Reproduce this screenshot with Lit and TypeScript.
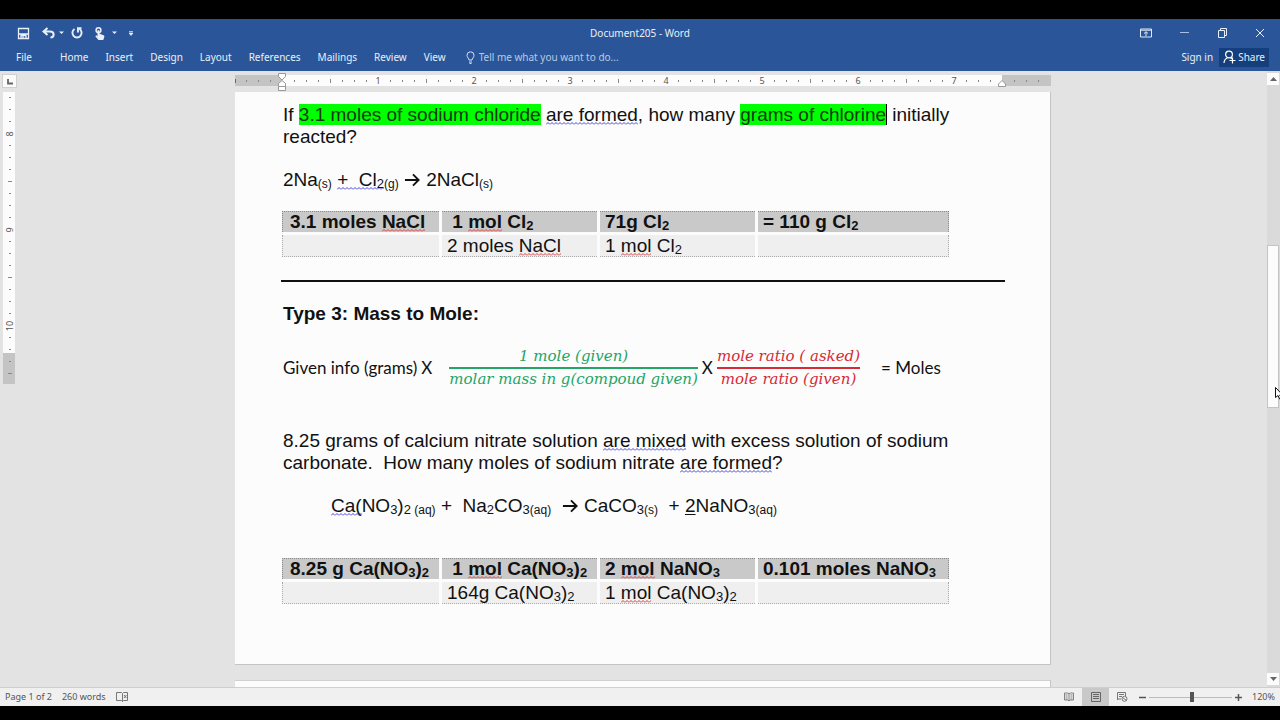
import { LitElement, html, css, svg, nothing } from "lit";
import { customElement, property } from "lit/decorators.js";

const TABS = ["Home", "Insert", "Design", "Layout", "References", "Mailings", "Review", "View"];

const arrow = html`<svg class="arrow" viewBox="0 0 18 14" role="img" aria-label="yields">
  <path d="M1 7H15.500M9.500 1L15.500 7L9.500 13" fill="none" stroke="#111" stroke-width="2" />
</svg>`;

@customElement("word-titlebar")
class WordTitlebar extends LitElement {
  static styles = css`
    :host { display: block; background: #2a5699; color: #e9eff8; font: 10px/16px "Noto Sans", "Open Sans", sans-serif; }
    button, a, input { font: inherit; color: inherit; background: none; border: 0; padding: 0; margin: 0; text-decoration: none; }
    svg { display: block; }
    .title { display: grid; grid-template-columns: 1fr auto 1fr; align-items: center; height: 28px; }
    .quick { display: flex; align-items: center; padding-left: 17px; }
    .gap { margin-left: 12px; }
    .near { margin-left: 4px; }
    .mid { margin-left: 7px; }
    .window { display: flex; justify-content: flex-end; align-items: center; gap: 26px; padding-right: 14px; }
    .ribbon { display: flex; align-items: center; height: 20px; padding-bottom: 4px; padding-right: 11px; }
    .file { margin-left: 16px; margin-right: 28px; }
    .tabs { display: flex; gap: 17px; }
    .tell { display: flex; align-items: center; gap: 4px; margin-left: 20px; flex: 1; color: #c3d1e7; }
    .tell input { width: 200px; outline: 0; }
    .tell input::placeholder { color: #b9c9e2; opacity: 1; }
    .share { display: flex; align-items: center; gap: 2px; margin-left: 6px; height: 19px; padding: 0 4px; background: #153f7c; }
  `;
  render() {
    const caret = html`<svg width="5" height="4" viewBox="0 0 5 4"><path d="M0 .5h5L2.500 3z" fill="#e9eff8" /></svg>`;
    return html`
      <div class="title">
        <div class="quick">
          <button aria-label="Save"><svg width="13" height="13" viewBox="0 0 13 13"><path d="M1.500 1.500h10v10h-10zM3 1.500M2 7h9M4 11.500V8.500h5v3M6 9v2" fill="none" stroke="#e9eff8" stroke-width="1.300" /></svg></button>
          <button class="gap" aria-label="Undo"><svg width="13" height="12" viewBox="0 0 13 12"><path d="M5.500 1L1.500 4.500L5.500 8M2 4.500H8c5 0 4.500 6 .500 6" fill="none" stroke="#e9eff8" stroke-width="2" /></svg></button>
          <button class="near" aria-label="Undo list">${caret}</button>
          <button class="mid" aria-label="Repeat"><svg width="12" height="12" viewBox="0 0 12 12"><path d="M3.500 2A4.600 4.600 0 1 0 8.500 2M6 1.200h4.500M7 1v4.500" fill="none" stroke="#e9eff8" stroke-width="1.900" /></svg></button>
          <button class="gap" aria-label="Touch mode"><svg width="10" height="13" viewBox="0 0 10 13"><circle cx="3.500" cy="3.200" r="2.400" fill="none" stroke="#e9eff8" stroke-width="1.500" /><path d="M2.500 3.200h2v3.500l4 1.500c1 .4 1 1 .7 2L8.300 13H3.500L.3 9.200l1-.9 1.200.9z" fill="#e9eff8" /></svg></button>
          <button class="mid" aria-label="Touch mode list">${caret}</button>
          <button class="gap" aria-label="Customize toolbar"><svg width="4" height="5" viewBox="0 0 4 5"><path d="M0 .5h4M0 2h4L2 4.500z" stroke="#e9eff8" stroke-width=".7" fill="#e9eff8" /></svg></button>
        </div>
        <div>Document205 - Word</div>
        <div class="window">
          <button aria-label="Ribbon display"><svg width="12" height="10" viewBox="0 0 12 10"><path d="M.5 1h11v8H.5zM.5 2.200h11M6 8V4M4 5.500L6 3.700L8 5.500" fill="none" stroke="#dfe8f5" /></svg></button>
          <button aria-label="Minimize"><svg width="12" height="10" viewBox="0 0 12 10"><path d="M2 4.500h9" stroke="#a9c0e4" /></svg></button>
          <button aria-label="Restore"><svg width="12" height="10" viewBox="0 0 12 10"><path d="M2.500 2.500h6v7h-6zM4.500 2.500v-2h6v7h-2" fill="none" stroke="#e9eff8" /></svg></button>
          <button aria-label="Close"><svg width="12" height="10" viewBox="0 0 12 10"><path d="M2 1l8 8M10 1L2 9" stroke="#e9eff8" /></svg></button>
        </div>
      </div>
      <div class="ribbon">
        <button class="file">File</button>
        <nav class="tabs">${TABS.map((t) => html`<button>${t}</button>`)}</nav>
        <label class="tell">
          <svg width="9" height="13" viewBox="0 0 9 13"><path d="M3 9C3 7.500 1 6.500 1 4.300a3.500 3.500 0 0 1 7 0C8 6.500 6 7.500 6 9zM3 11h3M3.500 12.500h2" fill="none" stroke="#d5e0f0" /></svg>
          <input aria-label="Tell me what you want to do" placeholder="Tell me what you want to do..." />
        </label>
        <a href="#signin">Sign in</a>
        <button class="share">
          <svg width="13" height="14" viewBox="0 0 13 14"><circle cx="6" cy="4.500" r="3.400" fill="none" stroke="#fff" stroke-width="1.200" /><path d="M1 13c.2-3 1.500-4.500 3.500-5.300M7.500 7.700l1.500 1M9.500 7.500v6M6.500 10.500h6" fill="none" stroke="#fff" stroke-width="1.200" /></svg>
          Share
        </button>
      </div>
    `;
  }
}

@customElement("word-rule")
class WordRule extends LitElement {
  @property({ type: Boolean }) vertical = false;
  static styles = css`
    :host { display: block; }
    svg { display: block; }
    .num { font: 9px "Noto Sans", sans-serif; fill: #555; text-anchor: middle; }
  `;
  render() {
    return this.vertical ? this.side() : this.top();
  }
  mark(k: number) {
    if (k % 8 === 0) return null;
    return k % 4 === 0 ? 3 : 1;
  }
  side() {
    const rows = Array.from({ length: 24 }, (_, i) => i);
    return html`<svg width="19" height="313" viewBox="0 0 19 313">
      <rect x="2.500" y="3.500" width="14" height="13" fill="#fbfbfb" stroke="#d0d0d0" />
      <path d="M8 8v4.500h5" fill="none" stroke="#666" stroke-width="1.800" />
      <rect x="3" y="21" width="12" height="261" fill="#fcfcfc" />
      <rect x="3" y="282" width="12" height="31" fill="#c4c4c4" />
      ${rows.map((i) => {
        const y = 27 + i * 12;
        const h = this.mark(i + 5);
        return h === null
          ? svg`<text class="num" transform="translate(13 ${y}) rotate(-90)">${(i + 5) / 8 + 7}</text>`
          : svg`<rect x=${h === 3 ? 8 : 9} y=${y - 1} width=${h === 3 ? 4 : 2} height="1" fill="#888" />`;
      })}
    </svg>`;
  }
  top() {
    const cells = Array.from({ length: 67 }, (_, i) => i - 3);
    return html`<svg width="816" height="21" viewBox="0 0 816 21">
      <rect y="4" width="816" height="11" fill="#c4c4c4" />
      <rect x="47" y="4" width="720" height="11" fill="#fcfcfc" />
      <rect x="0" y="8" width="1" height="4" fill="#666" />
      ${cells.map((k) => {
        if (k === 0 || k === 60) return nothing;
        const x = 47 + k * 12;
        const h = this.mark(k);
        return h === null
          ? svg`<text class="num" x=${x} y="13">${k / 8}</text>`
          : svg`<rect x=${x} y=${h === 3 ? 8 : 9} width="1" height=${h === 3 ? 4 : 2} fill="#888" />`;
      })}
      <path d="M43.500 2.500h7v3L47 9l-3.500-3.500zM43.500 15.500V12.500L47 9.500l3.500 3v7h-7zM43.500 15.500h7" fill="#fff" stroke="#999" />
      <path d="M763.500 15.500V13L767 9.500l3.500 3.500v2.500z" fill="#fff" stroke="#999" />
    </svg>`;
  }
}

@customElement("word-page")
class WordPage extends LitElement {
  static styles = css`
    :host { display: block; color: #111; font: 19px/22px "Liberation Sans", Arial, sans-serif; }
    .page { background: #fcfcfc; border-right: 1px solid #c4c4c4; border-bottom: 1px solid #c4c4c4; padding: 12px 45px 60px 47px; }
    p, h2 { margin: 0; padding-left: 1px; white-space: pre-wrap; }
    h2 { font-size: 19px; line-height: 22px; font-weight: 700; }
    .text { display: block; }
    mark { background: #00ff00; color: #123a12; }
    .cursor { border-right: 1px solid #000; }
    .gram, .spell { background-repeat: repeat-x; background-position: 0 18px; background-size: 4px 3px; }
    .gram { background-image: url("data:image/svg+xml,%3Csvg xmlns='http://www.w3.org/2000/svg' viewBox='0 0 4 3'%3E%3Cpath d='M0 2.500L2 .5L4 2.500' fill='none' stroke='%234444dd'/%3E%3C/svg%3E"); }
    .spell { background-image: url("data:image/svg+xml,%3Csvg xmlns='http://www.w3.org/2000/svg' viewBox='0 0 4 3'%3E%3Cpath d='M0 2.500L2 .5L4 2.500' fill='none' stroke='%23e03c3c'/%3E%3C/svg%3E"); }
    .under { text-decoration: underline; text-underline-offset: 2px; }
    sub { font-size: 13px; line-height: 1px; vertical-align: -2px; }
    .state { font-size: 12px; }
    .arrow { width: 17px; height: 14px; vertical-align: -1px; }
    .equation { margin-top: 21px; }
    .inset { padding-left: 49px; }
    table { table-layout: fixed; width: 673px; border-spacing: 3px; margin: 17px -3px -3px; line-height: 20px; }
    .late { margin-top: 38px; }
    th, td { padding: 1px 5px 0; height: 20px; text-align: left; white-space: pre; background: #efefef; font-weight: 400; border: 0 dotted #aaa; border-bottom-width: 1px; }
    th { font-weight: 700; background: #c9c9c9; border-width: 1px 0 0; border-color: #888; padding-top: 0; }
    tr > :first-child { border-left-width: 1px; padding-left: 7px; }
    tr > :last-child { border-right-width: 1px; }
    .c1 { width: 157px; }
    .c2 { width: 155px; }
    hr { border: 0; height: 2px; background: #111; margin: 23px 0 21px -1px; }
    .formula { display: flex; align-items: center; margin: 21px 0 40px; padding-left: 1px; font: 17px/22px Lato, sans-serif; }
    .times { margin: 0 4px; }
    .wide { margin-right: 17px; }
    .fraction { display: grid; text-align: center; font: italic 15px/21px "DejaVu Serif", serif; white-space: pre; }
    .fraction span:first-child { border-bottom: 2px solid currentColor; }
    .green { color: #23a566; }
    .red { color: #d52b36; }
    .result { margin-left: 21px; }
    .next { margin-top: 15px; border-top: 1px solid #d0d0d0; height: 8px; padding: 0; }
  `;
  nitrate() {
    return html`Ca(NO<sub>3</sub>)<sub>2</sub>`;
  }
  render() {
    const mol = html`<span class="spell">mol</span>`;
    const nacl = html`<span class="spell">NaCl</span>`;
    const cols = html`<colgroup><col class="c1" /><col class="c2" /><col class="c2" /><col /></colgroup>`;
    return html`
      <article class="page">
        <p><span class="text">If <mark>3.1 moles of sodium chloride</mark> <span class="gram">are formed</span>, how many <mark class="cursor">grams of chlorine</mark> initially</span><span class="text">reacted?</span></p>
        <p class="equation">2Na<sub class="state">(s)</sub> <span class="gram">+  Cl<sub>2</sub></span><sub class="state">(g)</sub> ${arrow} 2NaCl<sub class="state">(s)</sub></p>
        <table>
          ${cols}
          <tr><th>3.1 moles ${nacl}</th><th> 1 ${mol} Cl<sub>2</sub></th><th>71g Cl<sub>2</sub></th><th>= 110 g Cl<sub>2</sub></th></tr>
          <tr><td></td><td>2 moles ${nacl}</td><td>1 ${mol} Cl<sub>2</sub></td><td></td></tr>
        </table>
        <hr />
        <h2>Type 3: Mass to Mole:</h2>
        <div class="formula">
          <span>Given info (grams)</span><span class="times wide">X</span>
          <span class="fraction green"><span>1 mole (given)</span><span>molar mass in g(compoud given)</span></span>
          <span class="times">X</span>
          <span class="fraction red"><span>mole ratio ( asked)</span><span>mole ratio (given)</span></span>
          <span class="result">= Moles</span>
        </div>
        <p><span class="text">8.25 grams of calcium nitrate solution <span class="gram">are mixed</span> with excess solution of sodium</span><span class="text">carbonate.  How many moles of sodium nitrate <span class="gram">are formed</span>?</span></p>
        <p class="equation inset"><span class="gram">Ca(</span>NO<sub>3</sub>)<sub>2</sub><sub class="state"> (aq)</sub> +  Na<sub>2</sub>CO<sub>3</sub><sub class="state">(aq)</sub>  ${arrow} CaCO<sub>3</sub><sub class="state">(s)</sub>  + <span class="under">2</span>NaNO<sub>3</sub><sub class="state">(aq)</sub></p>
        <table class="late">
          ${cols}
          <tr><th>8.25 g ${this.nitrate()}</th><th> 1 ${mol} ${this.nitrate()}</th><th>2 ${mol} NaNO<sub>3</sub></th><th>0.101 moles NaNO<sub>3</sub></th></tr>
          <tr><td></td><td>164g ${this.nitrate()}</td><td>1 ${mol} ${this.nitrate()}</td><td></td></tr>
        </table>
      </article>
      <article class="page next"></article>
    `;
  }
}

@customElement("word-status")
class WordStatus extends LitElement {
  static styles = css`
    :host { display: flex; align-items: center; height: 18px; background: #f0f0f0; color: #555; font: 9px/16px "Noto Sans", "Open Sans", sans-serif; padding: 0 5px; }
    svg { display: block; }
    button { background: none; border: 0; padding: 0; color: inherit; font: inherit; }
    .words { margin: 0 10px; }
    .grow { flex: 1; }
    .view { width: 27px; height: 18px; display: grid; place-items: center; }
    .on { background: #c9c9c9; }
    .zoom { display: flex; align-items: center; gap: 3px; margin-left: 3px; }
    .level { margin-left: 7px; }
    input { appearance: none; width: 83px; height: 12px; margin: 0; background: linear-gradient(#bbb, #bbb) center / 100% 1px no-repeat; }
    input::-webkit-slider-thumb { appearance: none; width: 4px; height: 10px; background: #555; }
  `;
  render() {
    return html`
      <span>Page 1 of 2</span><span class="words">260 words</span>
      <button aria-label="Proofing"><svg width="12" height="10" viewBox="0 0 12 10"><path d="M.5 .5h5l1 1v8l-1-1h-5zM6.500 1.500l1-1h4v8h-4l-1 1M8 3l2.500 3M10.500 3L8 6" fill="none" stroke="#777" /></svg></button>
      <span class="grow"></span>
      <button class="view" aria-label="Read mode"><svg width="10" height="10" viewBox="0 0 10 10"><path d="M.5 1h3.500l1 1 1-1h3.500v7H6l-1 1-1-1H.5zM5 2v7M1.500 3h2M1.500 5h2M1.500 7h2M6.500 3h2M6.500 5h2M6.500 7h2" fill="none" stroke="#777" stroke-width=".9" /></svg></button>
      <button class="view on" aria-label="Print layout"><svg width="10" height="10" viewBox="0 0 10 10"><path d="M.5 .5h9v9h-9zM2 2.500h6M2 4.500h6M2 6.500h6" fill="none" stroke="#666" /></svg></button>
      <button class="view" aria-label="Web layout"><svg width="11" height="10" viewBox="0 0 11 10"><path d="M.5 8V.5h8V4M2 2.500h5M2 4.500h3M0 7h4" fill="none" stroke="#777" /><circle cx="7.500" cy="6.800" r="2.500" fill="none" stroke="#777" /><path d="M5.500 5.500l4 3" stroke="#777" /></svg></button>
      <div class="zoom">
        <button aria-label="Zoom out"><svg width="7" height="7" viewBox="0 0 7 7"><path d="M0 3.500h7" stroke="#555" stroke-width="1.500" /></svg></button>
        <input type="range" aria-label="Zoom" min="0" max="200" value="103" />
        <button aria-label="Zoom in"><svg width="7" height="7" viewBox="0 0 7 7"><path d="M0 3.500h7M3.500 0v7" stroke="#555" stroke-width="1.500" /></svg></button>
        <span class="level">120%</span>
      </div>
    `;
  }
}

@customElement("app-root")
class AppRoot extends LitElement {
  static styles = css`
    :host { display: flex; flex-direction: column; box-sizing: border-box; height: 100vh; padding: 19px 0 14px; background: #000; }
    .work { display: grid; grid-template-columns: 19px 1fr 13px; flex: 1; min-height: 0; background: #e3e3e3; overflow: hidden; }
    .canvas { display: flex; flex-direction: column; align-items: center; overflow: hidden; min-width: 0; }
    .sheet { width: 816px; }
    .scroll { position: relative; display: flex; flex-direction: column; background: #dadada; padding: 2px 1px 2px 0; }
    .step { flex: none; display: grid; place-items: center; height: 12px; padding: 0; border: 0; background: #fcfcfc; }
    .before { flex: 161; }
    .thumb { flex: 161; background: #fcfcfc; border: 1px solid #c4c4c4; }
    .after { flex: 266; }
    .pointer { position: absolute; left: 8px; top: 316px; }
    .line { border-top: 1px solid #cfcfcf; }
  `;
  render() {
    return html`
      <word-titlebar></word-titlebar>
      <main class="work">
        <word-rule vertical></word-rule>
        <div class="canvas">
          <word-rule class="sheet"></word-rule>
          <word-page class="sheet"></word-page>
        </div>
        <div class="scroll">
          <button class="step" aria-label="Scroll up"><svg width="7" height="4" viewBox="0 0 7 4"><path d="M0 4L3.500 0L7 4z" fill="#666" /></svg></button>
          <span class="before"></span>
          <span class="thumb"></span>
          <span class="after"></span>
          <button class="step" aria-label="Scroll down"><svg width="7" height="4" viewBox="0 0 7 4"><path d="M0 0h7L3.500 4z" fill="#666" /></svg></button>
          <svg class="pointer" width="8" height="13" viewBox="0 0 8 13"><path d="M.5 .5v10l2.500-2 1.700 3.500 1.500-.7L4.700 8h3z" fill="#fff" stroke="#111" /></svg>
        </div>
      </main>
      <word-status class="line"></word-status>
    `;
  }
}
